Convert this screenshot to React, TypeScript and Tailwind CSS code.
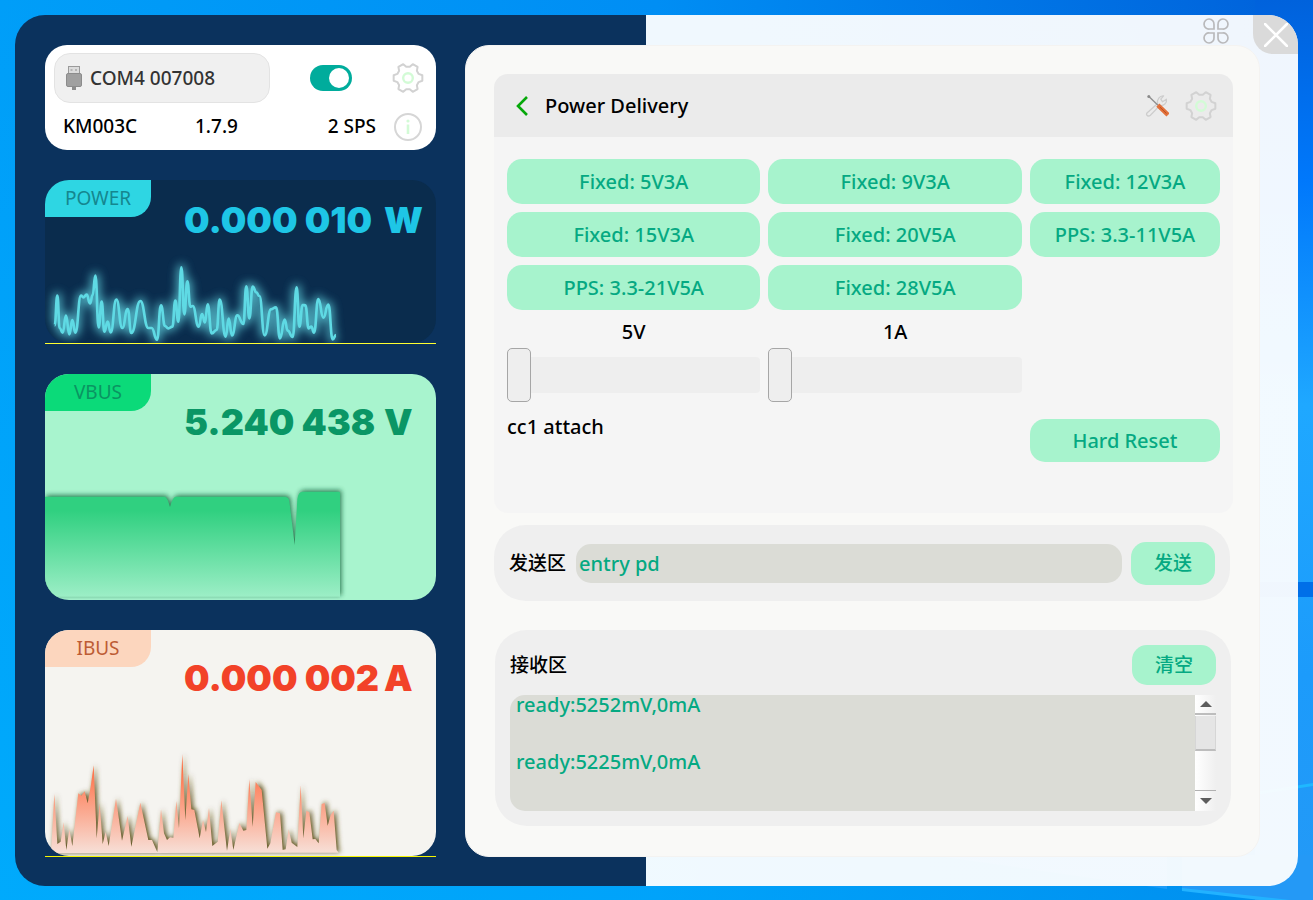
import { useState } from 'react'
import type { ReactNode } from 'react'

type Point = [number, number]

interface Reading {
  label: string
  value: string
  unit: string
}

const PROFILES = [
  'Fixed: 5V3A',
  'Fixed: 9V3A',
  'Fixed: 12V3A',
  'Fixed: 15V3A',
  'Fixed: 20V5A',
  'PPS: 3.3-11V5A',
  'PPS: 3.3-21V5A',
  'Fixed: 28V5A',
]

const POWER: Reading = { label: 'POWER', value: '0.000 010', unit: 'W' }
const VBUS: Reading = { label: 'VBUS', value: '5.240 438', unit: 'V' }
const IBUS: Reading = { label: 'IBUS', value: '0.000 002', unit: 'A' }

const POWER_SAMPLES: Point[] = [
  [74, 466], [82, 377], [89, 474], [98, 488], [108, 437], [118, 493], [127, 450], [136, 488],
  [153, 377], [160, 382], [170, 374], [180, 400], [188, 375], [196, 317], [206, 472], [215, 395],
  [223, 485], [233, 455], [242, 487], [259, 389], [277, 474], [293, 417], [304, 489], [331, 393],
  [355, 474], [365, 474], [381, 509], [393, 406], [405, 468], [415, 475], [427, 470], [436, 392],
  [445, 455], [454, 292], [463, 433], [472, 334], [481, 410], [488, 408], [506, 470], [516, 432],
  [525, 457], [533, 403], [545, 490], [560, 480], [569, 389], [587, 500], [596, 446], [606, 496],
  [622, 436], [640, 462], [649, 349], [658, 445], [668, 350], [679, 367], [688, 378], [704, 496],
  [723, 418], [738, 412], [750, 505], [764, 449], [773, 482], [788, 501], [800, 352], [808, 470],
  [818, 405], [826, 406], [836, 475], [844, 470], [852, 488], [865, 387], [880, 443], [895, 404],
  [908, 508], [918, 495],
]

const IBUS_SAMPLES: Point[] = [
  [63, 700], [73, 522], [82, 672], [92, 665], [101, 607], [109, 690], [118, 627], [127, 678],
  [145, 520], [154, 527], [164, 514], [173, 550], [182, 500], [191, 436], [200, 655], [209, 550],
  [218, 672], [227, 635], [236, 678], [258, 536], [276, 662], [293, 588], [304, 680], [331, 548],
  [355, 660], [366, 660], [382, 697], [393, 568], [402, 640], [411, 660], [420, 652], [430, 653],
  [439, 543], [447, 625], [457, 402], [466, 600], [475, 462], [484, 568], [493, 570], [509, 655],
  [519, 600], [528, 636], [537, 564], [547, 678], [563, 665], [574, 541], [591, 693], [601, 627],
  [610, 690], [628, 609], [640, 632], [649, 630], [658, 478], [668, 620], [677, 486], [695, 510],
  [712, 686], [721, 670], [738, 577], [750, 580], [758, 690], [767, 688], [776, 628], [785, 668],
  [802, 681], [812, 496], [820, 655], [829, 572], [838, 577], [848, 658], [856, 657], [866, 670],
  [875, 552], [884, 549], [893, 617], [902, 585], [911, 572], [920, 690], [926, 698],
]

/** Curve with flat tangents at every sample. */
function smoothPath(points: Point[]): string {
  return points
    .map(([x, y], i) => {
      if (i === 0) return `M${x} ${y}`
      const [px, py] = points[i - 1]
      const mx = (px + x) / 2
      return `C${mx} ${py} ${mx} ${y} ${x} ${y}`
    })
    .join(' ')
}

function gearPath(): string {
  const pts: string[] = []
  for (let tooth = 0; tooth < 6; tooth++) {
    for (const [offset, radius] of [[-21, 11.4], [-11, 14.6], [11, 14.6], [21, 11.4]]) {
      const a = ((tooth * 60 + offset) * Math.PI) / 180
      pts.push(`${(16 + radius * Math.cos(a)).toFixed(2)} ${(16 + radius * Math.sin(a)).toFixed(2)}`)
    }
  }
  return `M${pts.join('L')}Z`
}

const POWER_PATH = smoothPath(POWER_SAMPLES)
const IBUS_PATH = `M${IBUS_SAMPLES.map((p) => p.join(' ')).join('L')}Z`
const GEAR_PATH = gearPath()

function GearIcon() {
  return (
    <svg viewBox="0 0 32 32" className="size-8" fill="none">
      <path d={GEAR_PATH} stroke="#d2d2d2" strokeWidth="2" strokeLinejoin="round" />
      <circle cx="16" cy="16" r="4.8" stroke="#d3fbd6" strokeWidth="2.4" />
    </svg>
  )
}

function InfoIcon() {
  return (
    <svg viewBox="0 0 28 28" className="size-7" fill="none">
      <circle cx="14" cy="14" r="13" stroke="#d6d6d6" strokeWidth="2" />
      <path d="M14 11.5V21" stroke="#d3fbd6" strokeWidth="2.6" />
      <circle cx="14" cy="8" r="1.6" fill="#d3fbd6" />
    </svg>
  )
}

function UsbIcon() {
  return (
    <svg viewBox="0 0 16 24" className="h-6 w-4 shrink-0">
      <rect x="2.5" y="0.5" width="11" height="8" fill="#dcdcdc" stroke="#9a9a9a" />
      <rect x="4.5" y="3" width="2" height="2" fill="#b4b4b4" />
      <rect x="9" y="3" width="2" height="2" fill="#b4b4b4" />
      <rect x="0.5" y="7.5" width="15" height="13" rx="1.5" fill="#a0a0a0" stroke="#8c8c8c" />
      <rect x="6" y="21" width="4" height="3" fill="#8c8c8c" />
    </svg>
  )
}

function ToolsIcon() {
  return (
    <svg viewBox="0 0 24 24" className="size-6" fill="none">
      <path
        d="M2 19 12.6 9.4C11.8 5.8 14.6 1.4 18.6 1.9L15.8 5.2 17.6 7.8 21.4 5.2C22.3 9 18.6 12.2 15 11.4L5.4 21.2C3.4 23 .4 21.2 2 19Z"
        stroke="#cdcdcd"
        strokeWidth="1.3"
        strokeLinejoin="round"
      />
      <path d="M4.4 3 13 11.2" stroke="#8f8f8f" strokeWidth="1.4" />
      <circle cx="3.8" cy="2.4" r="1.5" fill="#8a8a8a" />
      <path d="M14.4 12.6 21.4 19.4" stroke="#e2703a" strokeWidth="4.4" strokeLinecap="square" />
      <path d="M14.8 13 21.4 19.4" stroke="#b9501f" strokeWidth="1" />
    </svg>
  )
}

function PetalsIcon() {
  return (
    <svg viewBox="0 0 26 26" className="size-[26px]" fill="none" stroke="#b9b9bb" strokeWidth="1.7">
      <path d="M11 11H6.5A5 5 0 1 1 11 6.5Z" />
      <path d="M15 11V6.5A5 5 0 1 1 19.5 11Z" />
      <path d="M11 15V19.5A5 5 0 1 1 6.5 15Z" />
      <path d="M15 15H19.5A5 5 0 1 1 15 19.5Z" />
    </svg>
  )
}

function Wallpaper() {
  return (
    <svg
      viewBox="0 0 1313 900"
      preserveAspectRatio="none"
      className="absolute inset-0 -z-10 size-full"
      aria-hidden="true"
    >
      <defs>
        <linearGradient id="sky">
          <stop offset="0" stopColor="#009ef8" />
          <stop offset="0.5" stopColor="#008ef4" />
          <stop offset="1" stopColor="#0060da" />
        </linearGradient>
        <linearGradient id="floor" x2="0" y2="1">
          <stop offset="0" stopColor="#00b4ff" stopOpacity="0" />
          <stop offset="1" stopColor="#00b4ff" stopOpacity="0.55" />
        </linearGradient>
        <linearGradient id="edge" x2="0" y2="1">
          <stop offset="0" stopColor="#0062dc" />
          <stop offset="0.2" stopColor="#0078fb" />
          <stop offset="0.45" stopColor="#1fa8ff" />
          <stop offset="0.75" stopColor="#1c9bfb" />
          <stop offset="1" stopColor="#2499f6" />
        </linearGradient>
      </defs>
      <rect width="1313" height="900" fill="url(#sky)" />
      <rect width="1313" height="900" fill="url(#floor)" />
      <rect x="1255" width="58" height="900" fill="url(#edge)" />
      <rect x="1255" y="582" width="58" height="15" fill="#006fe8" />
      <path d="M930 855 1167 855V889Z" fill="#1d9cf8" />
      <path d="M1182 855H1313V900H1270L1182 890Z" fill="#2499f6" />
      <path d="M1182 888 1290 900H1260L1182 891Z" fill="#22b2ff" />
      <path d="M1255 792 1313 783V786L1255 795Z" fill="#1fb8ff" />
    </svg>
  )
}

interface ReadingHeadProps {
  reading: Reading
  tabClass: string
  valueClass: string
}

function ReadingHead({ reading, tabClass, valueClass }: ReadingHeadProps) {
  return (
    <div className="flex items-start">
      <h2 className={`h-[37px] w-[106px] rounded-br-[20px] text-center leading-[37px] ${tabClass}`}>
        {reading.label}
      </h2>
      <p
        className={`ml-[33px] flex gap-2 font-[Inter] text-[36px] leading-10 font-black whitespace-pre ${valueClass}`}
      >
        <span className="w-[192px]">{reading.value}</span>
        <span>{reading.unit}</span>
      </p>
    </div>
  )
}

function ActionButton({ children, className }: { children: ReactNode; className: string }) {
  return (
    <button
      type="button"
      className={`rounded-[15px] bg-[#a7f3cd] text-center text-[#05a982] hover:bg-[#94ebc0] ${className}`}
    >
      {children}
    </button>
  )
}

function DeviceCard() {
  const [on, setOn] = useState(true)

  return (
    <section className="rounded-[22px] bg-white pt-2 pr-3 pl-[9px] font-medium">
      <div className="flex items-center justify-between">
        <div className="flex h-[50px] w-[216px] items-center gap-2 rounded-2xl border border-[#e3e3e3] bg-[#f0f0f0] px-[11px]">
          <UsbIcon />
          <select
            aria-label="Port"
            className="min-w-0 flex-1 appearance-none bg-transparent text-[#333] outline-none"
          >
            <option>COM4 007008</option>
          </select>
        </div>
        <input
          type="checkbox"
          role="switch"
          aria-label="Connect"
          checked={on}
          onChange={(e) => setOn(e.target.checked)}
          className="flex h-[26px] w-[42px] appearance-none items-center rounded-full bg-[#c4c4c4] px-[3px] before:size-[20px] before:rounded-full before:bg-white checked:justify-end checked:bg-[#00ac9c]"
        />
        <button type="button" aria-label="Settings">
          <GearIcon />
        </button>
      </div>
      <div className="flex h-[47px] items-center pr-[2px] pl-[9px] text-black">
        <span className="w-[132px]">KM003C</span>
        <span className="flex-1">1.7.9</span>
        <span>2 SPS</span>
        <button type="button" aria-label="Info" className="ml-[18px]">
          <InfoIcon />
        </button>
      </div>
    </section>
  )
}

function PowerCard() {
  return (
    <section className="border-b border-[#ffff30]">
      <div className="overflow-hidden rounded-[24px] bg-[#0a2c4d]">
        <ReadingHead reading={POWER} tabClass="bg-[#2ed6e3] text-[#15868f]" valueClass="mt-5 text-[#1ec6e6]" />
        <svg viewBox="45 210 1173 309" className="block w-full" fill="none">
          <defs>
            <filter id="glow" x="-10%" y="-40%" width="120%" height="180%">
              <feGaussianBlur stdDeviation="15" />
            </filter>
          </defs>
          <path d={POWER_PATH} stroke="#62d4e0" strokeWidth="22" opacity="0.75" filter="url(#glow)" />
          <path d={POWER_PATH} stroke="#5fdae4" strokeWidth="8" strokeLinejoin="round" />
        </svg>
      </div>
    </section>
  )
}

function VbusCard() {
  const area =
    'M45 395H405Q412 397 420 426Q428 396 437 395H765Q776 396 778 408L794 540L802 402Q805 380 818 380H926Q930 380 930 384V695H45Z'

  return (
    <section className="overflow-hidden rounded-[24px] bg-[#a8f4ce]">
      <ReadingHead reading={VBUS} tabClass="bg-[#0bda79] text-[#0a9462]" valueClass="mt-7 text-[#0a9665]" />
      <svg viewBox="45 231 1173 474" className="block w-full">
        <defs>
          <linearGradient id="vbus-fill" x2="0" y2="1">
            <stop offset="0.18" stopColor="#30d080" />
            <stop offset="1" stopColor="#9ceec6" />
          </linearGradient>
          <filter id="vbus-shadow" x="-5%" y="-10%" width="110%" height="120%">
            <feGaussianBlur stdDeviation="8" />
          </filter>
        </defs>
        <path d={area} fill="#14663c" filter="url(#vbus-shadow)" opacity="0.85" transform="translate(4 -4)" />
        <path d={area} fill="url(#vbus-fill)" />
      </svg>
    </section>
  )
}

function IbusCard() {
  return (
    <section className="border-b border-[#f5f500]">
      <div className="overflow-hidden rounded-[24px] bg-[#f5f4f0]">
        <ReadingHead reading={IBUS} tabClass="bg-[#fcd6be] text-[#bd5c34]" valueClass="mt-7 text-[#f24228]" />
        <svg viewBox="45 234 1173 474" className="block w-full">
          <defs>
            <linearGradient id="ibus-fill" x2="0" y2="1">
              <stop offset="0.1" stopColor="#ff6a3e" />
              <stop offset="1" stopColor="#f7e0d8" />
            </linearGradient>
            <filter id="ibus-shadow" x="-5%" y="-10%" width="110%" height="120%">
              <feGaussianBlur stdDeviation="8" />
            </filter>
          </defs>
          <path d={IBUS_PATH} fill="#5a4d14" filter="url(#ibus-shadow)" transform="translate(6 -2)" />
          <path d={IBUS_PATH} fill="url(#ibus-fill)" />
        </svg>
      </div>
    </section>
  )
}

function LevelSlider({ id, label }: { id: string; label: string }) {
  return (
    <div className="flex flex-col">
      <label htmlFor={id} className="text-center leading-8">
        {label}
      </label>
      <input
        id={id}
        type="range"
        defaultValue={0}
        className="h-[54px] w-full appearance-none bg-transparent [&::-webkit-slider-runnable-track]:h-9 [&::-webkit-slider-runnable-track]:rounded [&::-webkit-slider-runnable-track]:bg-[#eeeeee] [&::-webkit-slider-thumb]:-mt-[9px] [&::-webkit-slider-thumb]:h-[54px] [&::-webkit-slider-thumb]:w-6 [&::-webkit-slider-thumb]:appearance-none [&::-webkit-slider-thumb]:rounded-[5px] [&::-webkit-slider-thumb]:border [&::-webkit-slider-thumb]:border-[#a6a6a6] [&::-webkit-slider-thumb]:bg-[#eeeeee]"
      />
    </div>
  )
}

function PowerDelivery() {
  return (
    <section>
      <header className="flex h-[63px] items-center rounded-t-[14px] bg-[#ebebeb] px-4">
        <button type="button" aria-label="Back" className="px-[6px]">
          <svg viewBox="0 0 12 20" className="h-5 w-3" fill="none">
            <path d="M11 1 2 10l9 9" stroke="#06a80a" strokeWidth="2.6" />
          </svg>
        </button>
        <h1 className="ml-[11px] flex-1 text-black">Power Delivery</h1>
        <button type="button" aria-label="Tools">
          <ToolsIcon />
        </button>
        <button type="button" aria-label="Power delivery settings" className="ml-4">
          <GearIcon />
        </button>
      </header>
      <div className="rounded-b-[14px] bg-[#f5f5f5] px-[13px] pt-[22px] pb-[51px]">
        <div className="grid grid-cols-[4fr_4fr_3fr] gap-2">
          {PROFILES.map((profile) => (
            <ActionButton key={profile} className="h-[45px]">
              {profile}
            </ActionButton>
          ))}
        </div>
        <div className="mt-[6px] grid grid-cols-[4fr_4fr_3fr] gap-x-2 text-black">
          <LevelSlider id="voltage" label="5V" />
          <LevelSlider id="current" label="1A" />
        </div>
        <div className="mt-[17px] grid grid-cols-[4fr_4fr_3fr] items-start gap-x-2">
          <p className="col-span-2 leading-4 text-black">cc1 attach</p>
          <ActionButton className="h-[43px]">Hard Reset</ActionButton>
        </div>
      </div>
    </section>
  )
}

function SendPanel() {
  const [command, setCommand] = useState('entry pd')

  return (
    <form
      className="mt-3 mr-[3px] flex h-[76px] items-center rounded-[32px] bg-[#efefef] px-[15px]"
      onSubmit={(e) => e.preventDefault()}
    >
      <label htmlFor="command" className="text-[19px] text-black">
        发送区
      </label>
      <input
        id="command"
        value={command}
        onChange={(e) => setCommand(e.target.value)}
        className="ml-[10px] h-[39px] min-w-0 flex-1 rounded-[15px] bg-[#dbdcd6] px-[3px] text-[#05a982] outline-none"
      />
      <ActionButton className="ml-[9px] h-[43px] w-[84px] text-[19px]">发送</ActionButton>
    </form>
  )
}

function ReceivePanel() {
  return (
    <section className="mt-[29px] mr-[2px] ml-px rounded-[32px] bg-[#efefef] p-[15px]">
      <div className="flex items-center justify-between">
        <label htmlFor="log" className="text-[19px] text-black">
          接收区
        </label>
        <ActionButton className="h-10 w-[84px] text-[19px]">清空</ActionButton>
      </div>
      <div className="mt-[10px] flex h-[116px]">
        <textarea
          id="log"
          readOnly
          defaultValue={'ready:5252mV,0mA\n\n\nready:5225mV,0mA'}
          className="min-w-0 flex-1 resize-none overflow-hidden rounded-l-[15px] bg-[#dbdcd6] px-[6px] leading-[19px] text-[#05a982] outline-none"
        />
        <div className="flex w-[21px] flex-col bg-linear-to-r from-white to-[#efefef]">
          <button
            type="button"
            aria-label="Scroll up"
            className="flex h-5 items-center justify-center border-b-2 border-[#bdbdbd]"
          >
            <svg viewBox="0 0 12 6" className="h-[6px] w-3">
              <path d="M0 6 6 0l6 6Z" fill="#5c5c5c" />
            </svg>
          </button>
          <div className="mt-px h-[35px] border-x border-b-2 border-x-[#d6d6d6] border-b-[#bdbdbd] bg-[#e5e5e5]" />
          <button
            type="button"
            aria-label="Scroll down"
            className="mt-auto flex h-[21px] items-center justify-center border-t border-[#b0b0b0]"
          >
            <svg viewBox="0 0 12 6" className="h-[6px] w-3">
              <path d="M0 0h12L6 6Z" fill="#5c5c5c" />
            </svg>
          </button>
        </div>
      </div>
    </section>
  )
}

export default function App() {
  return (
    <div className="relative isolate min-h-screen p-[15px] pb-[14px] font-['Noto_Sans','Noto_Sans_CJK_SC',sans-serif] text-[19px]">
      <Wallpaper />
      <div className="overflow-hidden rounded-[30px] bg-[linear-gradient(to_right,#0b325d_0_631px,rgba(255,255,255,0.94)_631px)] pb-[29px]">
        <header className="flex h-[30px] items-start justify-end gap-6">
          <button type="button" aria-label="Apps" className="pt-[3px]">
            <PetalsIcon />
          </button>
          <button
            type="button"
            aria-label="Close"
            className="flex h-[39px] w-[45px] shrink-0 items-center justify-center rounded-bl-[20px] bg-[#dadada]"
          >
            <svg viewBox="0 0 24 24" className="size-6" fill="none">
              <path d="M1 1 23 23M23 1 1 23" stroke="#fff" strokeWidth="2.6" strokeLinecap="round" />
            </svg>
          </button>
        </header>
        <div className="flex items-stretch gap-[29px] pr-[38px] pl-[30px]">
          <aside className="flex w-[391px] shrink-0 flex-col gap-[30px]">
            <DeviceCard />
            <PowerCard />
            <VbusCard />
            <IbusCard />
          </aside>
          <main className="min-w-0 flex-1 rounded-[24px] border border-[#f4f3f1] bg-[#f9f9f7] py-7 pr-[26px] pl-7 text-[20px] font-medium">
            <PowerDelivery />
            <SendPanel />
            <ReceivePanel />
          </main>
        </div>
      </div>
    </div>
  )
}
